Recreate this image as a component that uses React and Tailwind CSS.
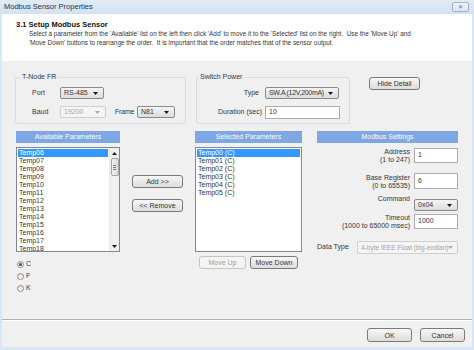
import React from "react";

const available = ["Temp06", "Temp07", "Temp08", "Temp09", "Temp10", "Temp11", "Temp12", "Temp13", "Temp14", "Temp15", "Temp16", "Temp17", "Temp18"];
const selected = ["Temp00 (C)", "Temp01 (C)", "Temp02 (C)", "Temp03 (C)", "Temp04 (C)", "Temp05 (C)"];

function Arrow({ disabled, up }) {
  return (
    <svg width="5" height="3" viewBox="0 0 5 3" className="shrink-0">
      <path d={up ? "M0 3h5L2.5 0z" : "M0 0h5L2.5 3z"} fill={disabled ? "#a8a8a8" : "#1a1a1a"} />
    </svg>
  );
}

function Combo({ value, className = "", disabled }) {
  return (
    <div
      className={`flex items-center justify-between pl-[3px] pr-[5px] border rounded-[2px] whitespace-nowrap overflow-hidden ${
        disabled
          ? "border-[#cfcfcf] bg-[#f5f5f5] text-[#a3a3a3]"
          : "border-[#8a8a8a] bg-linear-to-b from-[#f5f5f5] to-[#dcdcdc] text-[#333]"
      } ${className}`}
    >
      <span>{value}</span>
      <Arrow disabled={disabled} />
    </div>
  );
}

function TextBox({ value, className = "" }) {
  return (
    <div className={`flex items-center pl-[3px] bg-white border border-[#abadb3] ${className}`}>{value}</div>
  );
}

function Btn({ children, className = "", disabled }) {
  return (
    <button
      type="button"
      className={`flex items-center justify-center border rounded-[3px] leading-none ${
        disabled
          ? "border-[#c5c5c5] bg-[#f4f4f4] text-[#a0a0a0]"
          : "border-[#7a7a7a] bg-linear-to-b from-[#f7f7f7] to-[#dddddd] text-[#333]"
      } ${className}`}
    >
      {children}
    </button>
  );
}

function Bar({ children }) {
  return <div className="h-[12px] bg-[#7ea7e3] text-white text-center leading-[12px]">{children}</div>;
}

function Radio({ label, checked }) {
  return (
    <div className="h-[12px] flex items-center gap-[2px] pl-[1px]">
      <div className="w-[7px] h-[7px] rounded-full border border-[#8c8c8c] bg-linear-to-b from-[#e4e4e4] to-[#fafafa] flex items-center justify-center">
        {checked && <div className="w-[3px] h-[3px] rounded-full bg-[#2c4f74]" />}
      </div>
      <span>{label}</span>
    </div>
  );
}

export default function App() {
  return (
    <div className="w-[474px] h-[350px] bg-[#d9e6f4] flex flex-col overflow-hidden font-['Liberation_Sans',Arial,sans-serif] text-[7px] text-[#363636]">
      {/* title bar */}
      <div className="h-[14px] shrink-0 flex items-center justify-between pl-[4px] pr-[5px] bg-linear-to-b from-[#e2ecf7] to-[#d3e1f1]">
        <span className="text-[7.5px] text-[#1e3553]">Modbus Sensor Properties</span>
        <div className="w-[17px] h-[10px] border border-[#9fb0c6] rounded-[2px] bg-linear-to-b from-[#f3f7fb] to-[#dae5f1] flex items-center justify-center text-[6px] text-[#5a6e88] leading-none">
          ✕
        </div>
      </div>

      <div className="flex-1 mx-[2px] mb-[3px] flex flex-col">
        {/* header */}
        <div className="h-[47px] shrink-0 bg-white pl-[14px] pt-[6px]">
          <div className="font-bold text-[7.5px] leading-[9px] text-[#111]">3.1 Setup Modbus Sensor</div>
          <div className="ml-[13px] mt-[1px] leading-[8.5px] text-[6.4px] whitespace-pre">
            <div>Select a parameter from the 'Available' list on the left then click 'Add' to move it to the 'Selected' list on the right.  Use the 'Move Up' and</div>
            <div>'Move Down' buttons to rearrange the order.  It is important that the order matches that of the sensor output.</div>
          </div>
        </div>

        {/* body */}
        <div className="flex-1 bg-[#f0f0f0] flex flex-col">
          <div className="flex items-start mt-[11px]">
            <fieldset className="ml-[13px] w-[171px] h-[52px] border border-[#d5dde3] rounded-[3px]">
              <legend className="ml-[5px] px-[1px] leading-[10px]">T-Node FR</legend>
              <div className="flex items-center mt-[5px] pl-[16px]">
                <span className="w-[28px]">Port</span>
                <Combo value="RS-485" className="w-[44px] h-[12px]" />
              </div>
              <div className="flex items-center mt-[7px] pl-[16px]">
                <span className="w-[28px]">Baud</span>
                <Combo value="19200" disabled className="w-[46px] h-[12px]" />
                <span className="ml-[9px] w-[22px] tracking-[-0.2px]">Frame</span>
                <Combo value="N81" className="w-[38px] h-[12px]" />
              </div>
            </fieldset>

            <fieldset className="ml-[10px] w-[154px] h-[52px] border border-[#d5dde3] rounded-[3px]">
              <legend className="ml-[2px] px-[1px] leading-[10px]">Switch Power</legend>
              <div className="flex items-center mt-[5px]">
                <span className="w-[62px] text-right">Type</span>
                <Combo value="SW.A (12V,200mA)" className="ml-[6px] w-[74px] h-[12px] pr-[4px] tracking-[-0.3px]" />
              </div>
              <div className="flex items-center mt-[7px]">
                <span className="w-[65px] text-right">Duration (sec)</span>
                <TextBox value="10" className="ml-[3px] w-[75px] h-[13px]" />
              </div>
            </fieldset>

            <Btn className="ml-[19px] mt-[5px] w-[51px] h-[13px]">Hide Detail</Btn>
          </div>

          <div className="flex items-start mt-[7px]">
            {/* available */}
            <div className="ml-[14px] w-[104px] flex flex-col">
              <Bar>Available Parameters</Bar>
              <div className="mt-[4px] h-[105px] border border-[#828790] bg-white flex overflow-hidden">
                <div className="flex-1 p-[1px] overflow-hidden">
                  {available.map((t, i) => (
                    <div
                      key={t}
                      className={`h-[8px] leading-[8px] pl-[1px] ${i === 0 ? "bg-[#3399ff] text-white" : ""}`}
                    >
                      {t}
                    </div>
                  ))}
                </div>
                <div className="w-[10px] bg-[#f0f0f0] border-l border-[#e6e6e6] flex flex-col items-center">
                  <div className="h-[10px] flex items-center justify-center">
                    <Arrow up />
                  </div>
                  <div className="w-[8px] h-[18px] border border-[#a3a3a3] rounded-[2px] bg-linear-to-r from-[#f2f2f2] to-[#dadada] flex flex-col items-center justify-center gap-[1px]">
                    <div className="w-[3px] h-[1px] bg-[#7a7a7a]" />
                    <div className="w-[3px] h-[1px] bg-[#7a7a7a]" />
                    <div className="w-[3px] h-[1px] bg-[#7a7a7a]" />
                  </div>
                  <div className="flex-1" />
                  <div className="h-[10px] flex items-center justify-center">
                    <Arrow />
                  </div>
                </div>
              </div>
              <div className="mt-[6px]">
                <Radio label="C" checked />
                <Radio label="F" />
                <Radio label="K" />
              </div>
            </div>

            {/* add / remove */}
            <div className="ml-[12px] w-[51px] flex flex-col">
              <Btn className="mt-[44px] h-[13px]">Add &gt;&gt;</Btn>
              <Btn className="mt-[11px] h-[13px]">&lt;&lt; Remove</Btn>
            </div>

            {/* selected */}
            <div className="ml-[12px] w-[107px] flex flex-col">
              <Bar>Selected Parameters</Bar>
              <div className="mt-[4px] h-[105px] border border-[#828790] bg-white p-[1px] overflow-hidden">
                {selected.map((t, i) => (
                  <div
                    key={t}
                    className={`h-[8px] leading-[8px] pl-[1px] ${i === 0 ? "bg-[#3399ff] text-white" : ""}`}
                  >
                    {t}
                  </div>
                ))}
              </div>
              <div className="flex mt-[4px]">
                <Btn disabled className="ml-[4px] w-[47px] h-[13px]">Move Up</Btn>
                <Btn className="ml-[4px] w-[48px] h-[13px]">Move Down</Btn>
              </div>
            </div>

            {/* modbus */}
            <div className="ml-[15px] w-[141px] flex flex-col">
              <Bar>Modbus Settings</Bar>
              <div className="flex items-start mt-[5px]">
                <div className="w-[93px] text-right leading-[8px]">
                  <div>Address</div>
                  <div>(1 to 247)</div>
                </div>
                <TextBox value="1" className="ml-[4px] w-[44px] h-[15px]" />
              </div>
              <div className="flex items-start mt-[9px]">
                <div className="w-[93px] text-right leading-[8px] mt-[1px]">
                  <div>Base Register</div>
                  <div>(0 to 65535)</div>
                </div>
                <TextBox value="6" className="ml-[4px] w-[44px] h-[16px]" />
              </div>
              <div className="flex items-start mt-[5px]">
                <div className="w-[93px] text-right leading-[8px]">Command</div>
                <Combo value="0x04" className="ml-[4px] mt-[4px] w-[44px] h-[12px]" />
              </div>
              <div className="flex items-start mt-[3px]">
                <div className="w-[93px] text-right leading-[8px]">
                  <div>Timeout</div>
                  <div>(1000 to 65000 msec)</div>
                </div>
                <TextBox value="1000" className="ml-[4px] w-[44px] h-[15px]" />
              </div>
              <div className="flex items-center mt-[11px]">
                <div className="w-[40px]">Data Type</div>
                <Combo value="4-byte IEEE Float (big-endian)" disabled className="w-[101px] h-[13px] text-[6.5px]" />
              </div>
            </div>
          </div>

          {/* footer */}
          <div className="mt-auto">
            <div className="h-[1px] bg-[#b4b4b4]" />
            <div className="h-[1px] bg-white" />
            <div className="flex justify-end gap-[8px] pr-[7px] mt-[7px] mb-[5px]">
              <Btn className="w-[45px] h-[14px]">OK</Btn>
              <Btn className="w-[45px] h-[14px]">Cancel</Btn>
            </div>
          </div>
        </div>
      </div>
    </div>
  );
}
